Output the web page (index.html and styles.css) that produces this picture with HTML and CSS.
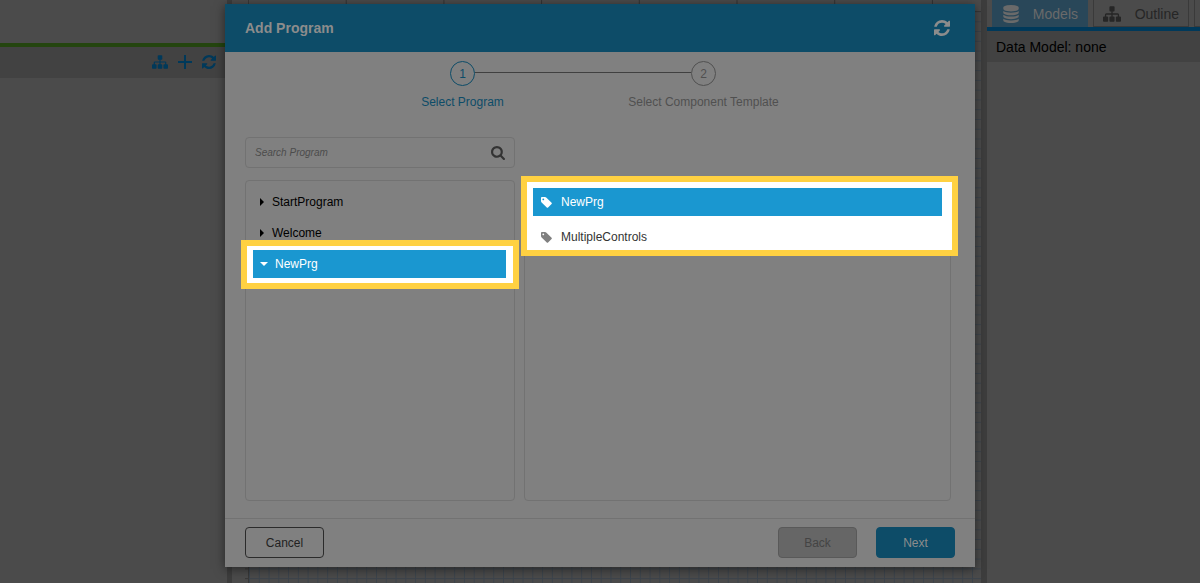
FILE: index.html
```html
<!DOCTYPE html>
<html lang="en">
<head>
<meta charset="utf-8">
<meta name="viewport" content="width=device-width, initial-scale=1">
<title>Add Program</title>
<link rel="stylesheet" href="styles.css">
</head>
<body>
<svg class="defs" aria-hidden="true">
  <symbol id="i-refresh" viewBox="0 128 1536 1536"><path d="M1511 1056q0 5-1 7-64 268-268 434.500t-478 166.500q-146 0-282.500-55t-243.500-157l-129 129q-19 19-45 19t-45-19-19-45v-448q0-26 19-45t45-19h448q26 0 45 19t19 45-19 45l-137 137q71 66 161 102t187 36q134 0 250-65t186-179q11-17 53-117 8-23 30-23h192q13 0 22.500 9.500t9.500 22.500zm25-800v448q0 26-19 45t-45 19h-448q-26 0-45-19t-19-45 19-45l138-138q-148-137-349-137-134 0-250 65t-186 179q-11 17-53 117-8 23-30 23h-199q-13 0-22.500-9.500t-9.500-22.500v-7q65-268 270-434.500t480-166.500q146 0 284 55.500t245 156.500l130-129q19-19 45-19t45 19 19 45z"/></symbol>
  <symbol id="i-sitemap" viewBox="0 0 1792 1792"><path d="M1792 1248v320q0 40-28 68t-68 28h-320q-40 0-68-28t-28-68v-320q0-40 28-68t68-28h96v-192h-512v192h96q40 0 68 28t28 68v320q0 40-28 68t-68 28h-320q-40 0-68-28t-28-68v-320q0-40 28-68t68-28h96v-192h-512v192h96q40 0 68 28t28 68v320q0 40-28 68t-68 28h-320q-40 0-68-28t-28-68v-320q0-40 28-68t68-28h96v-192q0-52 38-90t90-38h512v-192h-96q-40 0-68-28t-28-68v-320q0-40 28-68t68-28h320q40 0 68 28t28 68v320q0 40-28 68t-68 28h-96v192h512q52 0 90 38t38 90v192h96q40 0 68 28t28 68z"/></symbol>
  <symbol id="i-plus" viewBox="0 0 14 14"><path d="M6 0h2v6h6v2H8v6H6V8H0V6h6z"/></symbol>
  <symbol id="i-search" viewBox="0 128 1664 1664"><path d="M1152 832q0-185-131.500-316.500t-316.500-131.500-316.500 131.500-131.500 316.500 131.500 316.500 316.500 131.500 316.500-131.500 131.500-316.500zm512 832q0 52-38 90t-90 38q-54 0-90-38l-343-342q-179 124-399 124-143 0-273.500-55.500t-225-150-150-225-55.500-273.500 55.500-273.500 150-225 225-150 273.500-55.500 273.500 55.500 225 150 150 225 55.500 273.500q0 220-124 399l343 343q37 37 37 90z"/></symbol>
  <symbol id="i-database" viewBox="0 0 1536 1792"><path d="M768 768q237 0 443-43t325-127v170q0 69-103 128t-280 93.500-385 34.500-385-34.500-280-93.500-103-128v-170q119 84 325 127t443 43zm0 768q237 0 443-43t325-127v170q0 69-103 128t-280 93.500-385 34.500-385-34.500-280-93.500-103-128v-170q119 84 325 127t443 43zm0-384q237 0 443-43t325-127v170q0 69-103 128t-280 93.500-385 34.500-385-34.500-280-93.500-103-128v-170q119 84 325 127t443 43zm0-1152q208 0 385 34.500t280 93.500 103 128v128q0 69-103 128t-280 93.500-385 34.500-385-34.500-280-93.500-103-128v-128q0-69 103-128t280-93.500 385-34.500z"/></symbol>
  <symbol id="i-tag" viewBox="0 128 1536 1536"><path d="M448 448q0-53-37.500-90.500t-90.500-37.500-90.500 37.500-37.500 90.500 37.500 90.500 90.500 37.500 90.500-37.500 37.500-90.500zm1067 576q0 53-37 90l-491 492q-39 37-91 37-53 0-90-37l-715-716q-38-37-64.500-101t-26.500-117v-416q0-52 38-90t90-38h416q53 0 117 26.500t102 64.500l715 714q37 39 37 91z"/></symbol>
  <symbol id="i-right" viewBox="0 0 8 8"><path d="M2 0l4 4-4 4z"/></symbol>
  <symbol id="i-down" viewBox="0 0 8 8"><path d="M0 2h8L4 6z"/></symbol>
</svg>

<div class="workspace">
  <aside class="side">
    <div class="side-top"></div>
    <div class="toolbar">
      <button class="icon-btn" type="button" aria-label="Tree"><svg class="icon icon-wide"><use href="#i-sitemap"/></svg></button>
      <button class="icon-btn" type="button" aria-label="Add"><svg class="icon"><use href="#i-plus"/></svg></button>
      <button class="icon-btn" type="button" aria-label="Refresh"><svg class="icon"><use href="#i-refresh"/></svg></button>
    </div>
  </aside>

  <main class="canvas">
    <svg class="grid" aria-hidden="true">
      <defs>
        <pattern id="cells" x="17" y="11.500" width="9.770" height="9.770" patternUnits="userSpaceOnUse"><path d="M0 .5H9.770M.5 0V9.770" fill="none" stroke="#3c444c"/></pattern>
        <pattern id="ticks" x="16" y="0" width="97.700" height="12" patternUnits="userSpaceOnUse"><path d="M.5 0V12" stroke="#333"/></pattern>
        <pattern id="side-ticks" x="0" y="11.500" width="17" height="9.770" patternUnits="userSpaceOnUse"><path d="M13 .5H17" stroke="#363636"/></pattern>
      </defs>
      <rect x="17" y="12" width="100%" height="100%" fill="url(#cells)"/>
      <rect x="0" y="0" width="100%" height="12" fill="url(#ticks)"/>
      <rect x="0" y="12" width="17" height="100%" fill="url(#side-ticks)"/>
      <path d="M0 11.500H2000M16.500 0V2000" stroke="#383838"/>
    </svg>
  </main>

  <aside class="models">
    <nav class="tabs">
      <button class="tab tab-on" type="button"><svg class="tab-icon"><use href="#i-database"/></svg>Models</button>
      <button class="tab" type="button"><svg class="tab-icon"><use href="#i-sitemap"/></svg>Outline</button>
      <span class="tab tab-more"></span>
    </nav>
    <p class="model-name">Data Model: none</p>
  </aside>
</div>

<div class="overlay">
  <section class="dialog" role="dialog" aria-labelledby="title">
    <header class="dialog-head">
      <h1 id="title">Add Program</h1>
      <button class="icon-btn head-btn" type="button" aria-label="Refresh programs"><svg class="icon icon-head"><use href="#i-refresh"/></svg></button>
    </header>

    <ol class="steps">
      <li class="step step-on"><span class="dot">1</span>Select Program</li>
      <li class="step"><span class="dot">2</span>Select Component Template</li>
    </ol>

    <div class="content">
      <div class="column">
        <div class="search">
          <input type="search" placeholder="Search Program" aria-label="Search Program">
          <button class="icon-btn search-btn" type="button" aria-label="Search"><svg class="icon"><use href="#i-search"/></svg></button>
        </div>
        <ul class="panel tree">
          <li class="row"><svg class="caret"><use href="#i-right"/></svg>StartProgram</li>
          <li class="row"><svg class="caret"><use href="#i-right"/></svg>Welcome</li>
          <li class="spot tree-spot"><div class="row row-on"><svg class="caret"><use href="#i-down"/></svg>NewPrg</div></li>
        </ul>
      </div>
      <div class="panel results">
        <ul class="spot result-list">
          <li class="row row-on"><svg class="tag"><use href="#i-tag"/></svg>NewPrg</li>
          <li class="row"><svg class="tag"><use href="#i-tag"/></svg>MultipleControls</li>
        </ul>
      </div>
    </div>

    <footer class="dialog-foot">
      <button class="btn btn-cancel" type="button">Cancel</button>
      <button class="btn btn-back" type="button" disabled>Back</button>
      <button class="btn btn-next" type="button">Next</button>
    </footer>
  </section>
</div>
</body>
</html>
```
FILE: styles.css
```css
* { box-sizing: border-box; }

body {
  margin: 0;
  height: 100vh;
  overflow: hidden;
  background: #4b4b4b;
  color: #000;
  font: 12px/16px "Liberation Sans", Arial, sans-serif;
}

h1, p, ul, ol { margin: 0; padding: 0; }
ul, ol { list-style: none; }
button, input { font: inherit; color: inherit; }
svg { display: block; fill: currentColor; flex: none; }

.defs { position: absolute; width: 0; height: 0; }

.workspace {
  display: grid;
  grid-template-columns: 227px 1fr 213px;
  height: 100%;
}

.side-top { height: 43px; }

.toolbar {
  display: flex;
  align-items: center;
  justify-content: flex-end;
  gap: 10px;
  height: 35px;
  padding: 0 11px 2px 0;
  border-top: 4px solid #24450f;
  background: #424242;
  color: #00395a;
}

.icon-btn {
  display: flex;
  padding: 0;
  border: 0;
  background: none;
}

.icon { width: 14px; height: 14px; }
.icon-wide { width: 16px; height: 16px; }
.icon-head { width: 16px; height: 16px; }

.canvas {
  display: flex;
  border-left: 5px solid #3d3d3d;
  border-right: 6px solid #3d3d3d;
}

.grid { width: 100%; height: 100%; }

.tabs {
  display: flex;
  gap: 5px;
  height: 31px;
  padding-left: 5px;
  overflow: hidden;
  border-bottom: 4px solid #00395a;
}

.tab {
  display: flex;
  align-items: center;
  justify-content: space-between;
  flex: none;
  width: 96px;
  height: 27px;
  padding: 2px 9px 0;
  border: 1px solid #3a3a3a;
  border-top: 0;
  background: #4b4b4b;
  color: #262626;
  font-size: 14px;
}

.tab-on {
  border-color: #294759;
  background: #294759;
  color: #6a6a6a;
}

.tab-icon { width: 18px; height: 18px; }

.model-name {
  padding: 6px 9px 5px;
  background: #424242;
  font-size: 14px;
  line-height: 20px;
}

.overlay {
  position: absolute;
  inset: 0;
  display: flex;
  justify-content: center;
  align-items: stretch;
  padding: 4px 0 16px;
}

.dialog {
  display: flex;
  flex-direction: column;
  width: 750px;
  background: #808080;
  box-shadow: 0 2px 10px rgba(0, 0, 0, .5);
}

.dialog-head {
  display: flex;
  align-items: center;
  justify-content: space-between;
  height: 48px;
  padding: 0 25px 0 20px;
  background: #0d4c68;
  color: #8c8c8c;
}

h1 { font-size: 14px; line-height: 20px; }

.steps {
  display: flex;
  justify-content: center;
  margin-right: 34px;
  padding: 9px 0 27px;
  color: #505050;
}

.step {
  position: relative;
  display: flex;
  flex-direction: column;
  align-items: center;
  gap: 8px;
  width: 241px;
}

.dot {
  display: flex;
  align-items: center;
  justify-content: center;
  width: 25px;
  height: 25px;
  border: 1px solid currentColor;
  border-radius: 50%;
}

.step-on { color: #0d4c68; }

.step-on::after {
  content: "";
  position: absolute;
  top: 11px;
  left: calc(50% + 12px);
  width: calc(100% - 25px);
  height: 1px;
  background: #404040;
}

.content {
  display: flex;
  flex: 1;
  align-items: stretch;
  gap: 9px;
  padding: 0 24px 17px 20px;
}

.column {
  display: flex;
  flex-direction: column;
  gap: 12px;
  flex: 0 0 270px;
}

.search {
  display: flex;
  align-items: center;
  height: 31px;
  padding: 0 9px;
  border: 1px solid #727272;
  border-radius: 4px;
}

.search input {
  flex: 1;
  min-width: 0;
  padding: 0;
  border: 0;
  background: none;
  font-size: 10px;
  font-style: italic;
}

.search input::placeholder { color: #4c4c4c; opacity: 1; }
.search-btn { color: #333; }

.panel {
  border: 1px solid #727272;
  border-radius: 4px;
}

.tree {
  display: flex;
  flex: 1;
  flex-direction: column;
  gap: 3px;
  padding: 7px 8px 7px 7px;
}

.row {
  display: flex;
  align-items: center;
  gap: 6px;
  height: 28px;
  padding: 0 5px;
}

.row-on { background: #1a97d0; color: #fff; }

/* Highlight frame drawn round the rows of interest */
.spot { position: relative; isolation: isolate; color: #333; }

.spot::before {
  content: "";
  position: absolute;
  z-index: -1;
  inset: -12px;
  border: 6px solid #ffd142;
  background: #fff;
}

.tree-spot::before { inset: -10px -13px -11px -12px; }
.tree-spot .row { padding-left: 7px; gap: 7px; }
.result-list::before { inset: -12px -16px -5px -12px; }

.caret { width: 8px; height: 8px; }

.results {
  flex: 1;
  margin-top: 43px;
  padding: 7px 8px;
}

.result-list { display: flex; flex-direction: column; gap: 7px; }
.result-list .row { gap: 9px; padding: 0 8px; }
.result-list .row:not(.row-on) .tag { color: #808080; }
.tag { width: 11px; height: 11px; }

.dialog-foot {
  display: flex;
  align-items: center;
  gap: 19px;
  padding: 8px 20px 9px;
  border-top: 1px solid #727272;
}

.btn {
  width: 79px;
  height: 31px;
  padding: 0;
  border: 1px solid #2b2b2b;
  border-radius: 4px;
  background: none;
  color: #222;
}

.btn-back { margin-left: auto; border-color: #595959; background: #666; color: #444; }
.btn-next { border-color: #0d4c68; background: #0d4c68; color: #8c8c8c; }
```
